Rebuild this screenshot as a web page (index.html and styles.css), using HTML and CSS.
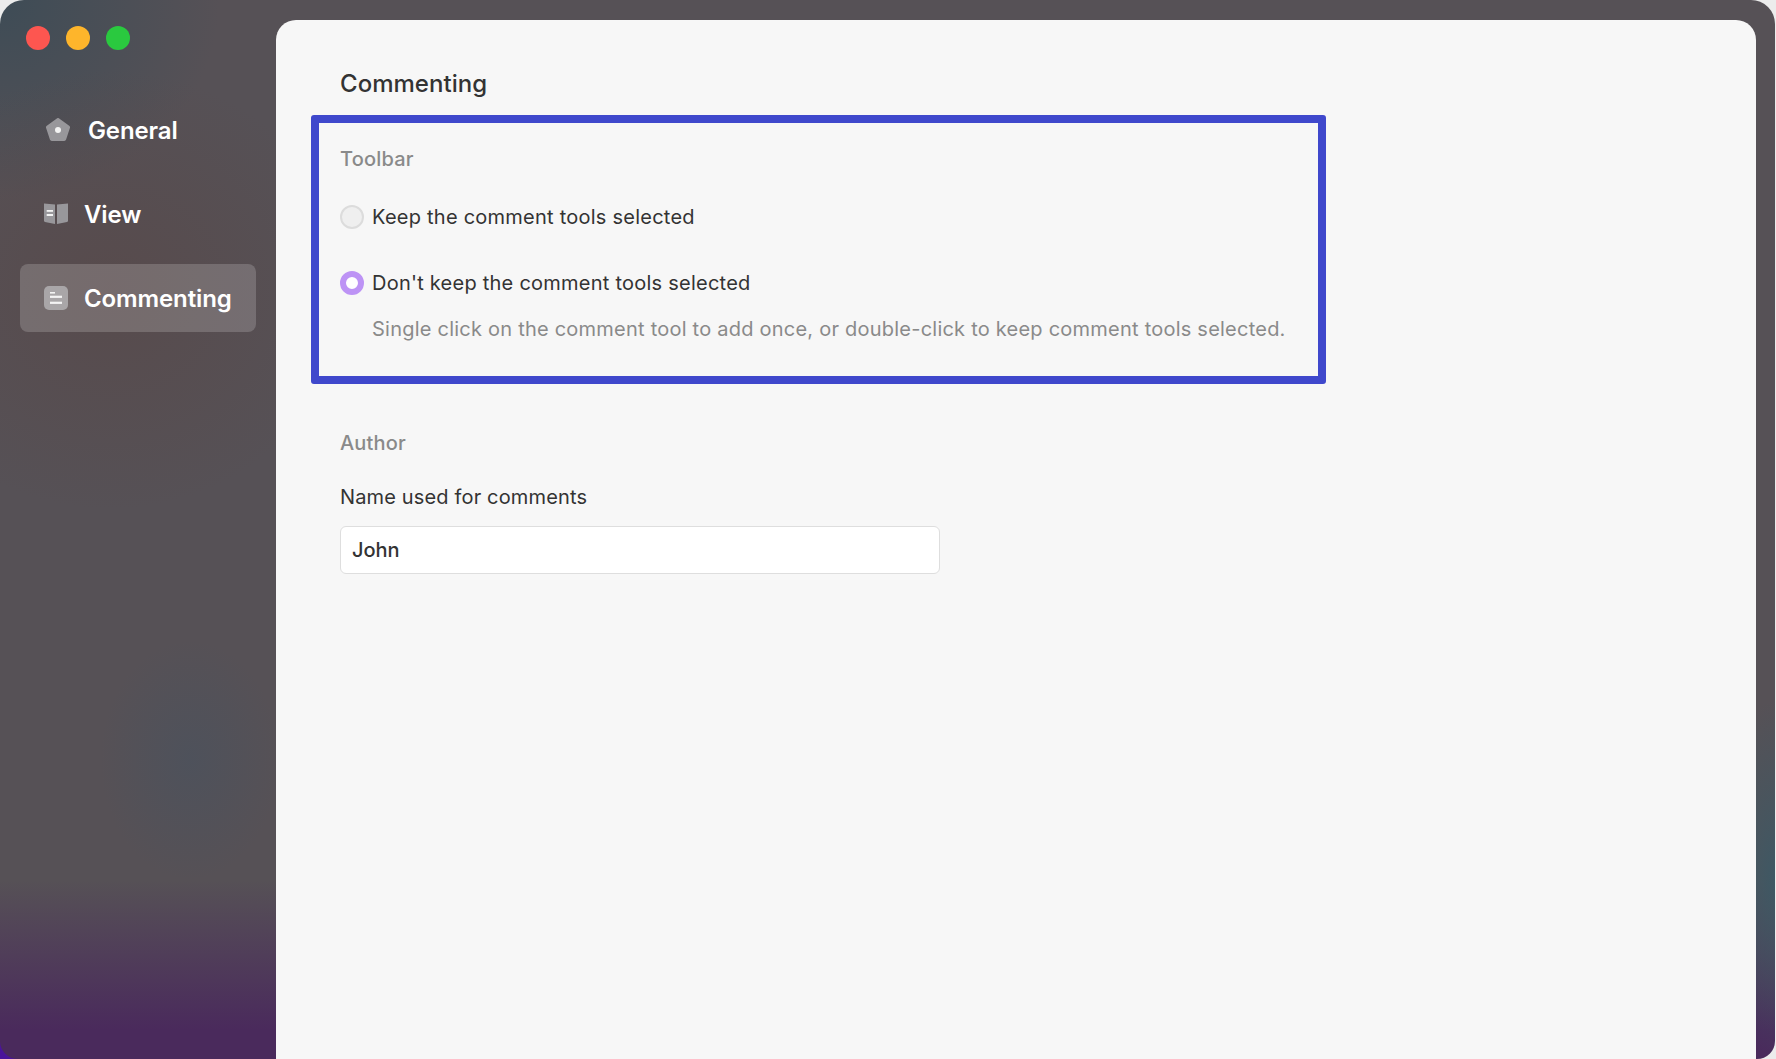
FILE: index.html
```html
<!DOCTYPE html>
<html lang="en">
<head>
<meta charset="utf-8">
<title>Preferences</title>
<link rel="stylesheet" href="styles.css">
</head>
<body>
<div class="window">
  <aside class="sidebar">
    <div class="traffic">
      <span class="light red"></span>
      <span class="light yellow"></span>
      <span class="light green"></span>
    </div>
    <nav class="nav">
      <div class="nav-item nav-general">
        <svg class="nav-icon" viewBox="0 0 24 24"><polygon points="12,2 22,9.300 18.200,21 5.800,21 2,9.300" fill="#98979b" stroke="#98979b" stroke-width="4" stroke-linejoin="round"/><circle cx="12" cy="12" r="3" fill="#f4f4f4"/></svg>
        <span>General</span>
      </div>
      <div class="nav-item">
        <svg class="nav-icon" viewBox="0 0 24 24"><path fill="#98979b" d="M0 1.500 11 2.500V22L1 20a1.200 1.200 0 0 1-1-1.200zM13 2.500 24 1.500v17.300c0 .6-.4 1.100-1 1.200l-10 2z"/><rect x="2.700" y="8" width="6.300" height="1.800" fill="#f4f4f4"/><rect x="2.700" y="12" width="6.300" height="2" fill="#f4f4f4"/></svg>
        <span>View</span>
      </div>
      <div class="nav-item active">
        <svg class="nav-icon" viewBox="0 0 24 24"><rect width="24" height="24" rx="5" fill="#a9a6a8"/><rect x="6" y="6" width="5" height="1.600" fill="#f4f4f4"/><rect x="6" y="9.700" width="12" height="2.200" fill="#f4f4f4"/><rect x="6" y="15.700" width="12" height="2.200" fill="#f4f4f4"/></svg>
        <span>Commenting</span>
      </div>
    </nav>
  </aside>
  <main class="panel">
    <h1 class="title">Commenting</h1>
    <section class="highlight">
      <h2 class="section-label">Toolbar</h2>
      <div class="radio-row first">
        <span class="radio"></span>
        <span class="radio-text">Keep the comment tools selected</span>
      </div>
      <div class="radio-row second">
        <span class="radio checked"></span>
        <span class="radio-text">Don't keep the comment tools selected</span>
      </div>
      <p class="hint">Single click on the comment tool to add once, or double-click to keep comment tools selected.</p>
    </section>
    <section class="author">
      <h2 class="section-label">Author</h2>
      <label class="field-label" for="name">Name used for comments</label>
      <input class="field" id="name" type="text" value="John">
    </section>
  </main>
</div>
</body>
</html>
```

FILE: styles.css
```css
* { box-sizing: border-box; }
html, body { margin: 0; height: 100%; }
body {
  background: radial-gradient(circle at 0 100%, #4a149a 24px, rgba(74, 20, 154, 0) 25px), #ececec;
  font-family: Inter, "Liberation Sans", sans-serif;
  overflow: hidden;
}
.window {
  display: flex;
  width: 1775px;
  height: 1059px;
  border-radius: 24px 24px 18px 18px;
  overflow: hidden;
  background:
    radial-gradient(ellipse 90px 120px at 190px 760px, rgba(70, 82, 96, .5), rgba(70, 82, 96, 0)),
    radial-gradient(ellipse 240px 220px at 110px 290px, rgba(88, 72, 72, .7), rgba(88, 72, 72, 0)),
    radial-gradient(ellipse 220px 200px at 0 0, rgba(62, 76, 86, 1), rgba(62, 76, 86, 0)),
    radial-gradient(ellipse 60px 180px at 1776px 880px, rgba(62, 88, 100, 1), rgba(62, 88, 100, 0)),
    linear-gradient(180deg, rgba(74, 42, 94, 0) 880px, #4a2a5c 1030px),
    #565156;
}
.sidebar {
  flex: 0 0 276px;
  padding: 26px 20px 0;
}
.traffic { display: flex; gap: 16px; padding-left: 6px; height: 24px; }
.light { width: 24px; height: 24px; border-radius: 50%; }
.red { background: #fd5650; }
.yellow { background: #feb52b; }
.green { background: #2ac93f; }
.nav { margin-top: 46px; display: flex; flex-direction: column; gap: 16px; }
.nav-item {
  display: flex;
  align-items: center;
  gap: 16px;
  height: 68px;
  padding-left: 24px;
  border-radius: 8px;
  color: #fff;
  font-size: 24px;
  font-weight: 600;
  letter-spacing: -.12px;
}
.nav-general { padding-left: 26px; gap: 18px; }
.nav-item.active { background: rgba(255, 255, 255, .18); }
.nav-icon { width: 24px; height: 24px; flex: none; }
.panel {
  flex: 1;
  margin: 20px 19px 0 0;
  padding: 48px 64px 0;
  background: #f7f7f7;
  border-radius: 20px 20px 0 0;
  color: #333;
}
.title { margin: 0; font-size: 24px; line-height: 32px; font-weight: 500; letter-spacing: .03px; }
.highlight {
  width: 1015px;
  height: 269px;
  margin: 15px 0 0 -29px;
  padding: 23px 21px 0;
  border: 8px solid #3f48cc;
  border-radius: 3px;
}
.section-label {
  margin: 0;
  font-size: 20px;
  line-height: 26px;
  font-weight: 500;
  letter-spacing: .18px;
  color: #8a8a8a;
}
.radio-row { display: flex; align-items: center; gap: 8px; height: 24px; }
.radio-row.first { margin-top: 33px; }
.radio-row.second { margin-top: 42px; }
.radio {
  width: 24px;
  height: 24px;
  flex: none;
  border-radius: 50%;
  background: #efefef;
  border: 2px solid #dcdcdc;
}
.radio.checked { background: #fff; border: 6px solid #bd93f5; }
.radio-text { font-size: 20px; letter-spacing: .24px; color: #333; }
.hint { margin: 21px 0 0 32px; font-size: 20px; line-height: 26px; letter-spacing: .23px; color: #8a8a8a; white-space: nowrap; }
.author { margin-top: 46px; }
.field-label { display: block; margin-top: 28px; font-size: 20px; line-height: 26px; letter-spacing: .15px; color: #333; }
.field {
  display: block;
  width: 600px;
  height: 48px;
  margin-top: 16px;
  padding: 0 11px;
  border: 1px solid #dedede;
  border-radius: 6px;
  background: #fff;
  font: 500 20px Inter, "Liberation Sans", sans-serif;
  color: #333;
}
```
